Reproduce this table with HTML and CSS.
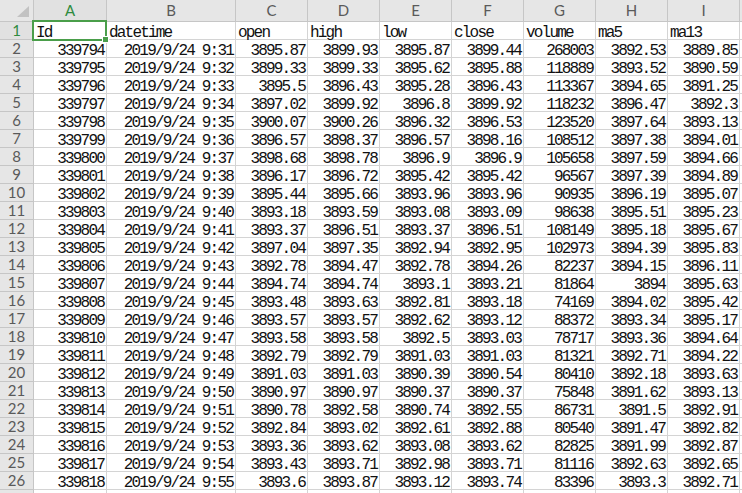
FILE: index.html
```html
<!DOCTYPE html>
<html>
<head>
<meta charset="utf-8">
<link rel="stylesheet" href="styles.css">
</head>
<body>
<div class="sheet">
  <div class="grid">
    <div class="r">
      <div class="corner"><span class="tri"></span></div>
      <div class="ch sel">A</div><div class="ch">B</div><div class="ch">C</div><div class="ch">D</div><div class="ch">E</div><div class="ch">F</div><div class="ch">G</div><div class="ch">H</div><div class="ch">I</div><div class="ch"></div>
    </div>
    <div class="r"><div class="h sel">1</div><div class="t">Id</div><div class="t">datetime</div><div class="t">open</div><div class="t">high</div><div class="t">low</div><div class="t">close</div><div class="t">volume</div><div class="t">ma5</div><div class="t">ma13</div><div class="e"></div></div>
    <div class="r"><div class="h">2</div><div class="n">339794</div><div class="n">2019/9/24 9:31</div><div class="n">3895.87</div><div class="n">3899.93</div><div class="n">3895.87</div><div class="n">3899.44</div><div class="n">268003</div><div class="n">3892.53</div><div class="n">3889.85</div><div class="e"></div></div>
    <div class="r"><div class="h">3</div><div class="n">339795</div><div class="n">2019/9/24 9:32</div><div class="n">3899.33</div><div class="n">3899.33</div><div class="n">3895.62</div><div class="n">3895.88</div><div class="n">118889</div><div class="n">3893.52</div><div class="n">3890.59</div><div class="e"></div></div>
    <div class="r"><div class="h">4</div><div class="n">339796</div><div class="n">2019/9/24 9:33</div><div class="n">3895.5</div><div class="n">3896.43</div><div class="n">3895.28</div><div class="n">3896.43</div><div class="n">113367</div><div class="n">3894.65</div><div class="n">3891.25</div><div class="e"></div></div>
    <div class="r"><div class="h">5</div><div class="n">339797</div><div class="n">2019/9/24 9:34</div><div class="n">3897.02</div><div class="n">3899.92</div><div class="n">3896.8</div><div class="n">3899.92</div><div class="n">118232</div><div class="n">3896.47</div><div class="n">3892.3</div><div class="e"></div></div>
    <div class="r"><div class="h">6</div><div class="n">339798</div><div class="n">2019/9/24 9:35</div><div class="n">3900.07</div><div class="n">3900.26</div><div class="n">3896.32</div><div class="n">3896.53</div><div class="n">123520</div><div class="n">3897.64</div><div class="n">3893.13</div><div class="e"></div></div>
    <div class="r"><div class="h">7</div><div class="n">339799</div><div class="n">2019/9/24 9:36</div><div class="n">3896.57</div><div class="n">3898.37</div><div class="n">3896.57</div><div class="n">3898.16</div><div class="n">108512</div><div class="n">3897.38</div><div class="n">3894.01</div><div class="e"></div></div>
    <div class="r"><div class="h">8</div><div class="n">339800</div><div class="n">2019/9/24 9:37</div><div class="n">3898.68</div><div class="n">3898.78</div><div class="n">3896.9</div><div class="n">3896.9</div><div class="n">105658</div><div class="n">3897.59</div><div class="n">3894.66</div><div class="e"></div></div>
    <div class="r"><div class="h">9</div><div class="n">339801</div><div class="n">2019/9/24 9:38</div><div class="n">3896.17</div><div class="n">3896.72</div><div class="n">3895.42</div><div class="n">3895.42</div><div class="n">96567</div><div class="n">3897.39</div><div class="n">3894.89</div><div class="e"></div></div>
    <div class="r"><div class="h">10</div><div class="n">339802</div><div class="n">2019/9/24 9:39</div><div class="n">3895.44</div><div class="n">3895.66</div><div class="n">3893.96</div><div class="n">3893.96</div><div class="n">90935</div><div class="n">3896.19</div><div class="n">3895.07</div><div class="e"></div></div>
    <div class="r"><div class="h">11</div><div class="n">339803</div><div class="n">2019/9/24 9:40</div><div class="n">3893.18</div><div class="n">3893.59</div><div class="n">3893.08</div><div class="n">3893.09</div><div class="n">98638</div><div class="n">3895.51</div><div class="n">3895.23</div><div class="e"></div></div>
    <div class="r"><div class="h">12</div><div class="n">339804</div><div class="n">2019/9/24 9:41</div><div class="n">3893.37</div><div class="n">3896.51</div><div class="n">3893.37</div><div class="n">3896.51</div><div class="n">108149</div><div class="n">3895.18</div><div class="n">3895.67</div><div class="e"></div></div>
    <div class="r"><div class="h">13</div><div class="n">339805</div><div class="n">2019/9/24 9:42</div><div class="n">3897.04</div><div class="n">3897.35</div><div class="n">3892.94</div><div class="n">3892.95</div><div class="n">102973</div><div class="n">3894.39</div><div class="n">3895.83</div><div class="e"></div></div>
    <div class="r"><div class="h">14</div><div class="n">339806</div><div class="n">2019/9/24 9:43</div><div class="n">3892.78</div><div class="n">3894.47</div><div class="n">3892.78</div><div class="n">3894.26</div><div class="n">82237</div><div class="n">3894.15</div><div class="n">3896.11</div><div class="e"></div></div>
    <div class="r"><div class="h">15</div><div class="n">339807</div><div class="n">2019/9/24 9:44</div><div class="n">3894.74</div><div class="n">3894.74</div><div class="n">3893.1</div><div class="n">3893.21</div><div class="n">81864</div><div class="n">3894</div><div class="n">3895.63</div><div class="e"></div></div>
    <div class="r"><div class="h">16</div><div class="n">339808</div><div class="n">2019/9/24 9:45</div><div class="n">3893.48</div><div class="n">3893.63</div><div class="n">3892.81</div><div class="n">3893.18</div><div class="n">74169</div><div class="n">3894.02</div><div class="n">3895.42</div><div class="e"></div></div>
    <div class="r"><div class="h">17</div><div class="n">339809</div><div class="n">2019/9/24 9:46</div><div class="n">3893.57</div><div class="n">3893.57</div><div class="n">3892.62</div><div class="n">3893.12</div><div class="n">88372</div><div class="n">3893.34</div><div class="n">3895.17</div><div class="e"></div></div>
    <div class="r"><div class="h">18</div><div class="n">339810</div><div class="n">2019/9/24 9:47</div><div class="n">3893.58</div><div class="n">3893.58</div><div class="n">3892.5</div><div class="n">3893.03</div><div class="n">78717</div><div class="n">3893.36</div><div class="n">3894.64</div><div class="e"></div></div>
    <div class="r"><div class="h">19</div><div class="n">339811</div><div class="n">2019/9/24 9:48</div><div class="n">3892.79</div><div class="n">3892.79</div><div class="n">3891.03</div><div class="n">3891.03</div><div class="n">81321</div><div class="n">3892.71</div><div class="n">3894.22</div><div class="e"></div></div>
    <div class="r"><div class="h">20</div><div class="n">339812</div><div class="n">2019/9/24 9:49</div><div class="n">3891.03</div><div class="n">3891.03</div><div class="n">3890.39</div><div class="n">3890.54</div><div class="n">80410</div><div class="n">3892.18</div><div class="n">3893.63</div><div class="e"></div></div>
    <div class="r"><div class="h">21</div><div class="n">339813</div><div class="n">2019/9/24 9:50</div><div class="n">3890.97</div><div class="n">3890.97</div><div class="n">3890.37</div><div class="n">3890.37</div><div class="n">75848</div><div class="n">3891.62</div><div class="n">3893.13</div><div class="e"></div></div>
    <div class="r"><div class="h">22</div><div class="n">339814</div><div class="n">2019/9/24 9:51</div><div class="n">3890.78</div><div class="n">3892.58</div><div class="n">3890.74</div><div class="n">3892.55</div><div class="n">86731</div><div class="n">3891.5</div><div class="n">3892.91</div><div class="e"></div></div>
    <div class="r"><div class="h">23</div><div class="n">339815</div><div class="n">2019/9/24 9:52</div><div class="n">3892.84</div><div class="n">3893.02</div><div class="n">3892.61</div><div class="n">3892.88</div><div class="n">80540</div><div class="n">3891.47</div><div class="n">3892.82</div><div class="e"></div></div>
    <div class="r"><div class="h">24</div><div class="n">339816</div><div class="n">2019/9/24 9:53</div><div class="n">3893.36</div><div class="n">3893.62</div><div class="n">3893.08</div><div class="n">3893.62</div><div class="n">82825</div><div class="n">3891.99</div><div class="n">3892.87</div><div class="e"></div></div>
    <div class="r"><div class="h">25</div><div class="n">339817</div><div class="n">2019/9/24 9:54</div><div class="n">3893.43</div><div class="n">3893.71</div><div class="n">3892.98</div><div class="n">3893.71</div><div class="n">81116</div><div class="n">3892.63</div><div class="n">3892.65</div><div class="e"></div></div>
    <div class="r"><div class="h">26</div><div class="n">339818</div><div class="n">2019/9/24 9:55</div><div class="n">3893.6</div><div class="n">3893.87</div><div class="n">3893.12</div><div class="n">3893.74</div><div class="n">83396</div><div class="n">3893.3</div><div class="n">3892.71</div><div class="e"></div></div>
    <div class="r"><div class="h"></div><div class="e"></div><div class="e"></div><div class="e"></div><div class="e"></div><div class="e"></div><div class="e"></div><div class="e"></div><div class="e"></div><div class="e"></div><div class="e"></div></div>
  </div>
  <div class="selbox"><span class="handle"></span></div>
</div>
</body>
</html>
```
FILE: styles.css
```css
html, body {
  margin: 0;
  padding: 0;
  background: #ffffff;
  overflow: hidden;
  width: 742px;
  height: 493px;
}

.sheet {
  position: relative;
  width: 742px;
  height: 493px;
  overflow: hidden;
}

.grid {
  display: grid;
  grid-template-columns: 34px 73px 129px repeat(7, 72px) 60px;
  grid-template-rows: 22px repeat(27, 18px);
  width: 800px;
}

.r {
  display: contents;
}

.grid .r > div {
  box-sizing: border-box;
  border-right: 1px solid #d4d4d4;
  border-bottom: 1px solid #d4d4d4;
  white-space: nowrap;
}

.grid .r > .corner,
.grid .r > .ch,
.grid .r > .h {
  background: #e6e6e6;
  border-right-color: #c6c6c6;
  border-bottom-color: #c6c6c6;
  font-family: Lato, "Liberation Sans", sans-serif;
  font-size: 15px;
  color: #5a5a5a;
  overflow: hidden;
}

.corner {
  position: relative;
}

.tri {
  position: absolute;
  right: 4px;
  bottom: 4px;
  width: 0;
  height: 0;
  border-left: 12px solid transparent;
  border-bottom: 11px solid #c2c2c2;
}

.ch {
  text-align: center;
  line-height: 21px;
}

.h {
  text-align: center;
  line-height: 17px;
}

.grid .r > .sel {
  color: #2e8b3e;
  background: #e1e1e1;
}

.t, .n {
  font-family: "Liberation Mono", monospace;
  font-size: 16px;
  letter-spacing: -1.8px;
  line-height: 17px;
  padding-top: 3px;
  color: #111111;
}

.t {
  text-align: left;
  padding-left: 2px;
}

.n {
  text-align: right;
  padding-right: 2px;
}

.selbox {
  position: absolute;
  left: 32px;
  top: 20px;
  width: 75px;
  height: 21px;
  box-sizing: border-box;
  border: 2px solid #4a9e4a;
}

.handle {
  position: absolute;
  right: -4px;
  bottom: -4px;
  width: 5px;
  height: 5px;
  background: #4a9e4a;
  border: 1px solid #ffffff;
}
```
